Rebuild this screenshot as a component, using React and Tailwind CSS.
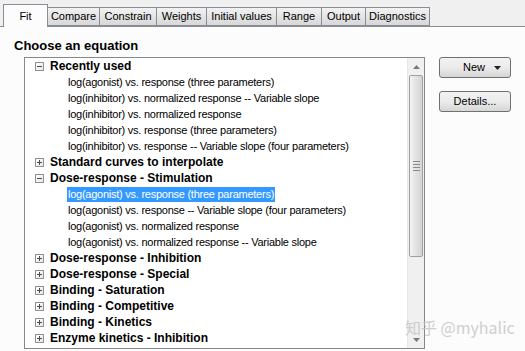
import React from "react";

const tabs = [
  { label: "Fit", w: "w-[45px]" },
  { label: "Compare", w: "w-[52px]" },
  { label: "Constrain", w: "w-[57px]" },
  { label: "Weights", w: "w-[50px]" },
  { label: "Initial values", w: "w-[70px]" },
  { label: "Range", w: "w-[45px]" },
  { label: "Output", w: "w-[44px]" },
  { label: "Diagnostics", w: "w-[64px]" },
];

const tree = [
  {
    title: "Recently used",
    open: true,
    items: [
      "log(agonist) vs. response (three parameters)",
      "log(inhibitor) vs. normalized response -- Variable slope",
      "log(inhibitor) vs. normalized response",
      "log(inhibitor) vs. response (three parameters)",
      "log(inhibitor) vs. response -- Variable slope (four parameters)",
    ],
  },
  { title: "Standard curves to interpolate" },
  {
    title: "Dose-response - Stimulation",
    open: true,
    items: [
      "log(agonist) vs. response (three parameters)",
      "log(agonist) vs. response -- Variable slope (four parameters)",
      "log(agonist) vs. normalized response",
      "log(agonist) vs. normalized response -- Variable slope",
    ],
    selected: 0,
  },
  { title: "Dose-response - Inhibition" },
  { title: "Dose-response - Special" },
  { title: "Binding - Saturation" },
  { title: "Binding - Competitive" },
  { title: "Binding - Kinetics" },
  { title: "Enzyme kinetics - Inhibition" },
];

function Expander({ open }) {
  return (
    <span className="relative w-[9px] h-[9px] border border-[#919191] bg-gradient-to-br from-white to-[#e8e8e8] shrink-0">
      <span className="absolute left-[1px] top-[3px] w-[5px] h-px bg-[#4a4a4a]" />
      {!open && (
        <span className="absolute left-[3px] top-[1px] w-px h-[5px] bg-[#4a4a4a]" />
      )}
    </span>
  );
}

function Tab({ label, w, active }) {
  if (active) {
    return (
      <div
        className={`${w} h-[23px] -mb-px bg-[#fcfcfc] border border-b-0 border-[#898c95] flex justify-center pt-[3px] text-[11px] text-black relative z-10`}
      >
        {label}
      </div>
    );
  }
  return (
    <div
      className={`${w} h-[19px] border border-l-0 border-[#898c95] bg-gradient-to-b from-[#f2f2f2] to-[#d8d8d8] flex items-center justify-center text-[11px] text-black`}
    >
      {label}
    </div>
  );
}

function Button({ children }) {
  return (
    <div className="w-[72px] h-[21px] rounded-[3px] border border-[#707070] bg-gradient-to-b from-[#f2f2f2] via-[#ebebeb] to-[#d6d6d6] flex items-center justify-center text-[11px] text-black">
      {children}
    </div>
  );
}

export default function App() {
  return (
    <div
      className="relative w-[525px] h-[351px] overflow-hidden bg-[#fcfcfc]"
      style={{ fontFamily: '"Liberation Sans", Arial, sans-serif' }}
    >
      {/* tab strip */}
      <div className="h-[27px] bg-[#f0f0f0] border-b border-[#898c95] flex items-end pl-[3px]">
        <Tab {...tabs[0]} active />
        {tabs.slice(1).map((t) => (
          <Tab key={t.label} {...t} />
        ))}
      </div>

      <div className="pl-[14px] pt-[11px]">
        <h1 className="text-[13px] font-bold text-black leading-[16px]">
          Choose an equation
        </h1>

        <div className="flex mt-[3px] pl-[10px]">
          {/* list box */}
          <div className="w-[401px] h-[292px] border border-[#828790] bg-white flex">
            <div className="flex-1 flex flex-col">
              {tree.map((g) => (
                <React.Fragment key={g.title}>
                  <div className="h-[16px] flex items-center pl-[10px] gap-[6px]">
                    <Expander open={g.open} />
                    <span className="text-[12px] font-bold text-black leading-[16px]">
                      {g.title}
                    </span>
                  </div>
                  {g.open &&
                    g.items.map((it, i) => (
                      <div key={it} className="h-[16px] flex items-center pl-[42px]">
                        <span
                          className={`text-[11px] tracking-[-0.25px] leading-[15px] px-px ${
                            g.selected === i ? "bg-[#3399ff] text-white" : "text-black"
                          }`}
                        >
                          {it}
                        </span>
                      </div>
                    ))}
                </React.Fragment>
              ))}
            </div>

            {/* scrollbar */}
            <div className="w-[17px] bg-[#f0f0f0] flex flex-col border-l border-[#e6e6e6]">
              <div className="h-[17px] flex items-center justify-center">
                <svg width="7" height="4" viewBox="0 0 7 4">
                  <path d="M0 4 L3.5 0 L7 4 Z" fill="#7a7a7a" />
                </svg>
              </div>
              <div className="h-[182px] mx-px rounded-[2px] border border-[#a0a0a0] bg-gradient-to-r from-[#f4f4f4] via-[#e2e2e2] to-[#d4d4d4] flex items-center justify-center">
                <div className="flex flex-col gap-[2px]">
                  <span className="w-[7px] h-px bg-[#8a8a8a]" />
                  <span className="w-[7px] h-px bg-[#8a8a8a]" />
                  <span className="w-[7px] h-px bg-[#8a8a8a]" />
                  <span className="w-[7px] h-px bg-[#8a8a8a]" />
                </div>
              </div>
              <div className="flex-1" />
              <div className="h-[17px] flex items-center justify-center">
                <svg width="7" height="4" viewBox="0 0 7 4">
                  <path d="M0 0 L3.5 4 L7 0 Z" fill="#7a7a7a" />
                </svg>
              </div>
            </div>
          </div>

          {/* buttons */}
          <div className="flex flex-col gap-[13px] ml-[14px]">
            <Button>
              <span className="ml-[14px]">New</span>
              <svg className="ml-[9px]" width="7" height="4" viewBox="0 0 7 4">
                <path d="M0 0 L3.5 4 L7 0 Z" fill="#222" />
              </svg>
            </Button>
            <Button>Details...</Button>
          </div>
        </div>
      </div>

      {/* watermark */}
      <div
        className="absolute left-[405px] top-[315px] text-[16px] text-[#c4c4c4] opacity-80"
        style={{ fontFamily: '"Noto Sans CJK SC", "Liberation Sans", sans-serif' }}
      >
        知乎 @myhalic
      </div>
    </div>
  );
}
